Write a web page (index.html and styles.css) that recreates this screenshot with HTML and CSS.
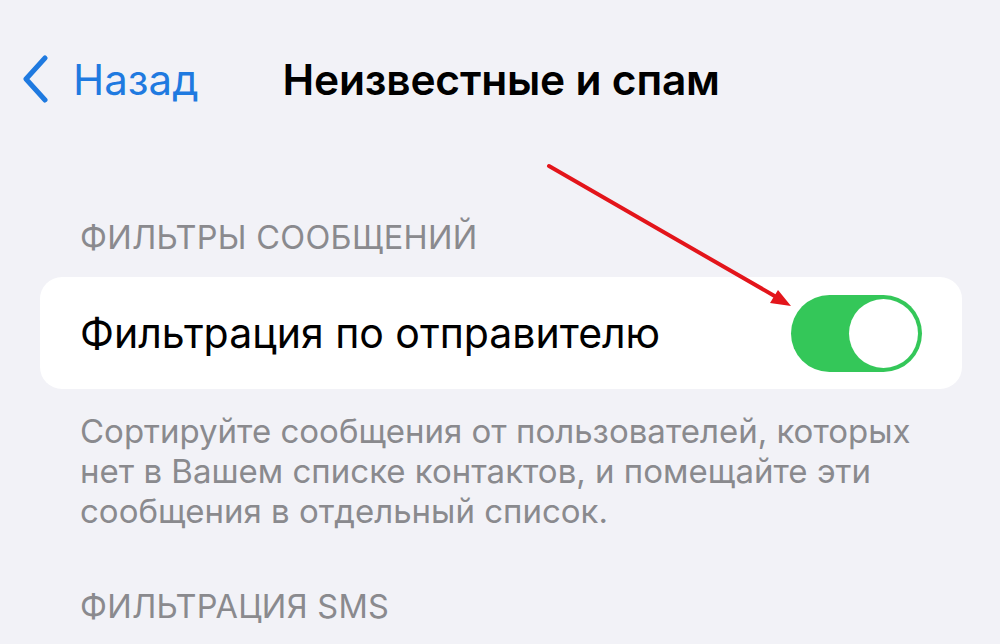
FILE: index.html
```html
<!DOCTYPE html>
<html>
<head>
    <title>Неизвестные и спам</title>
    <meta name="viewport" content="width=device-width, initial-scale=1.0">
    <link rel="stylesheet" href="styles.css">
</head>
<body>
    <div class="screen">
        <!-- Navigation bar -->
        <div class="nav-bar">
            <a class="back-link" href="#">
                <svg class="chevron" width="28" height="48" viewBox="0 0 28 48">
                    <path d="M24 3 L5 24 L24 45" fill="none" stroke="#1f7ae0" stroke-width="5" stroke-linecap="round" stroke-linejoin="round"/>
                </svg>
                <span>Назад</span>
            </a>
            <h1 class="nav-title">Неизвестные и спам</h1>
        </div>

        <!-- Message filters group -->
        <div class="section">
            <div class="section-header">ФИЛЬТРЫ СООБЩЕНИЙ</div>
            <div class="card">
                <div class="row">
                    <span class="row-label">Фильтрация по отправителю</span>
                    <div class="switch on"><div class="knob"></div></div>
                </div>
            </div>
            <p class="section-footer">Сортируйте сообщения от пользователей, которых нет в Вашем списке контактов, и помещайте эти сообщения в отдельный список.</p>
        </div>

        <div class="section">
            <div class="section-header">ФИЛЬТРАЦИЯ SMS</div>
        </div>

        <!-- Red pointer drawn over the screen -->
        <svg class="pointer" width="1000" height="644" viewBox="0 0 1000 644">
            <line x1="549" y1="166" x2="778" y2="298" stroke="#e3151b" stroke-width="4" stroke-linecap="round"/>
            <polygon points="791,306 770,303 778,290" fill="#e3151b"/>
        </svg>
    </div>
</body>
</html>
```

FILE: styles.css
```css
* {
    box-sizing: border-box;
    margin: 0;
    padding: 0;
}

body {
    font-family: Inter, "Noto Sans", sans-serif;
    background-color: #f2f2f7;
    color: #000;
}

.screen {
    position: relative;
    width: 1000px;
    height: 644px;
    overflow: hidden;
}

/* Top bar with back button and title */
.nav-bar {
    display: flex;
    align-items: center;
    height: 118px;
    padding: 40px 0 0 21px;
}
.back-link {
    display: flex;
    align-items: center;
    gap: 24px;
    color: #1f7ae0;
    text-decoration: none;
    font-size: 42px;
}
.chevron {
    flex-shrink: 0;
}
.nav-title {
    margin-left: 84px;
    font-size: 42.5px;
    font-weight: 600;
    letter-spacing: -0.2px;
}

/* Grouped list sections */
.section {
    padding: 0 38px 0 40px;
}
.section-header {
    padding: 100px 0 20px 40px;
    font-size: 32.5px;
    color: #8a8a8e;
    letter-spacing: 0.3px;
}
.section + .section .section-header {
    padding-top: 56px;
}
.card {
    background-color: #fff;
    border-radius: 22px;
}
.row {
    display: flex;
    align-items: center;
    justify-content: space-between;
    height: 112px;
    padding: 0 40px;
}
.row-label {
    font-size: 41px;
}
.section-footer {
    padding: 22px 40px 0 40px;
    font-size: 33px;
    line-height: 40px;
    color: #8a8a8e;
}

/* Toggle switch */
.switch {
    width: 131px;
    height: 77px;
    border-radius: 39px;
    background-color: #e9e9eb;
    padding: 4px;
    display: flex;
}
.switch.on {
    background-color: #34c759;
    justify-content: flex-end;
}
.knob {
    width: 69px;
    height: 69px;
    border-radius: 50%;
    background-color: #fff;
}

.pointer {
    position: absolute;
    left: 0;
    top: 0;
}
```
